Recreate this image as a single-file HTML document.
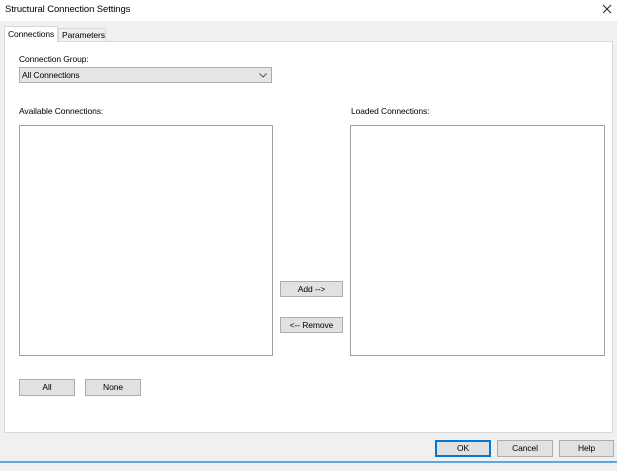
<!DOCTYPE html>
<html><head><style>
body{margin:0;width:617px;height:471px;background:#f0f0f0;font-family:"Liberation Sans",sans-serif;font-size:8.5px;color:#000;position:relative;overflow:hidden;letter-spacing:-0.1px}
.a{position:absolute}
.title{left:0;top:0;width:617px;height:21px;background:#fff}
.btn{position:absolute;background:#e1e1e1;border:1px solid #adadad;box-sizing:border-box;text-align:center;line-height:14px;font-size:8.5px}
.list{position:absolute;background:#fff;border:1px solid #a0a0a0;box-sizing:border-box}
</style></head><body>
<div class="a title"></div>
<div class="a" style="left:5px;top:4px;font-size:9.5px">Structural Connection Settings</div>
<svg class="a" style="left:602px;top:4px" width="10" height="10"><path d="M1 1L9 9M9 1L1 9" stroke="#222" stroke-width="1"/></svg>
<div class="a" style="left:4px;top:41px;width:609px;height:392px;background:#fff;border:1px solid #d9d9d9;box-sizing:border-box"></div>
<div class="a" style="left:58px;top:28px;width:48px;height:13px;background:#f0f0f0;border:1px solid #d9d9d9;border-bottom:none;box-sizing:border-box;line-height:12px;padding-left:3px">Parameters</div>
<div class="a" style="left:4px;top:26px;width:54px;height:16px;background:#fff;border:1px solid #d9d9d9;border-bottom:none;box-sizing:border-box;line-height:14px;padding-left:3px">Connections</div>
<div class="a" style="left:19px;top:54px">Connection Group:</div>
<div class="a" style="left:19px;top:67px;width:253px;height:16px;background:#e5e5e5;border:1px solid #adadad;box-sizing:border-box;line-height:14px;padding-left:2px">All Connections<svg style="position:absolute;right:4px;top:5px" width="8" height="5"><path d="M0.5 0.5L4 4L7.5 0.5" stroke="#555" fill="none"/></svg></div>
<div class="a" style="left:19px;top:106px">Available Connections:</div>
<div class="a" style="left:351px;top:106px">Loaded Connections:</div>
<div class="list" style="left:19px;top:125px;width:254px;height:231px"></div>
<div class="list" style="left:350px;top:125px;width:255px;height:231px"></div>
<div class="btn" style="left:280px;top:281px;width:63px;height:16px">Add --&gt;</div>
<div class="btn" style="left:280px;top:317px;width:63px;height:16px">&lt;-- Remove</div>
<div class="btn" style="left:19px;top:379px;width:56px;height:17px">All</div>
<div class="btn" style="left:85px;top:379px;width:56px;height:17px">None</div>
<div class="btn" style="left:435px;top:440px;width:56px;height:17px;border:1px solid #0078d7;box-shadow:inset 0 0 0 1px #0078d7">OK</div>
<div class="btn" style="left:497px;top:440px;width:56px;height:17px">Cancel</div>
<div class="btn" style="left:559px;top:440px;width:55px;height:17px">Help</div>
<div class="a" style="left:0;top:461px;width:617px;height:2px;background:#5aa9e6"></div>
</body></html>
